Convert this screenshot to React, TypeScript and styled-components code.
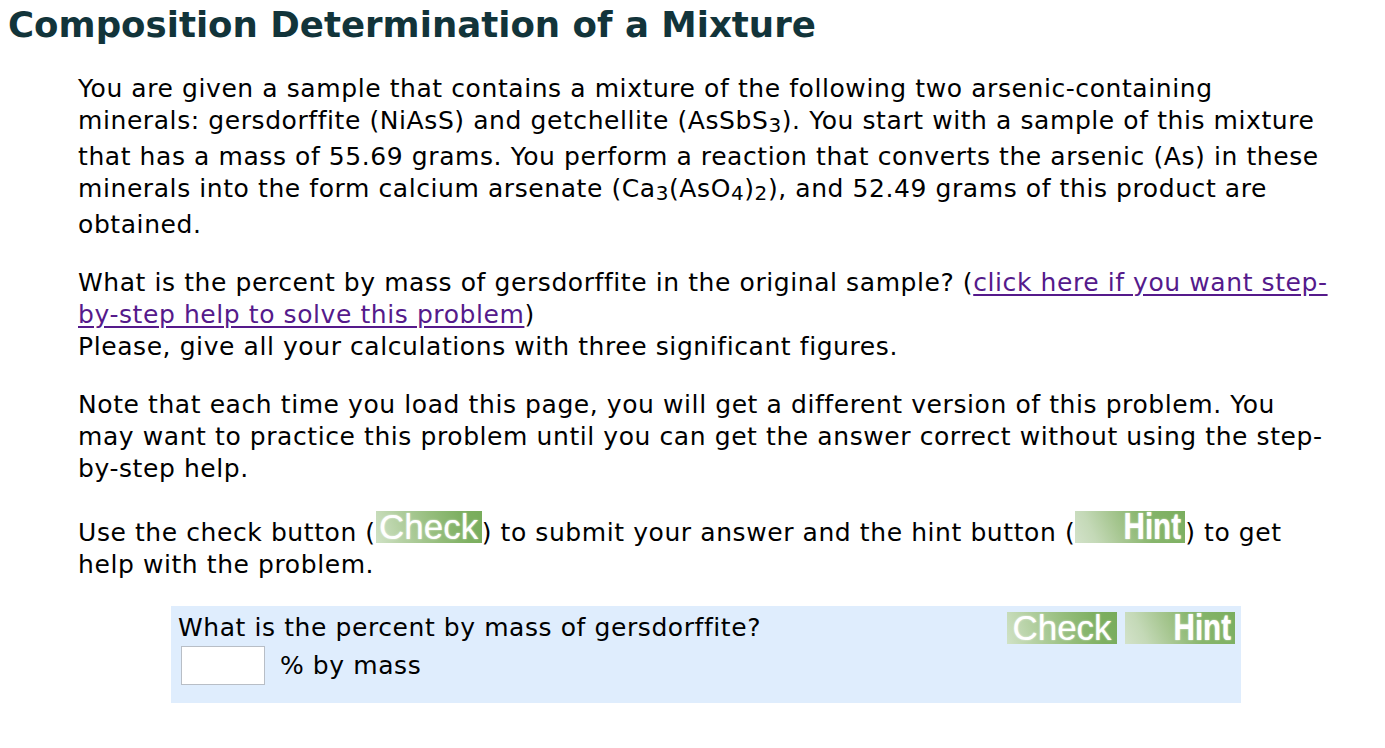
import React from "react";
import styled, { createGlobalStyle } from "styled-components";

const Global = createGlobalStyle`
  html, body { margin: 0; padding: 0; background: #ffffff; }
  body { font-family: "DejaVu Sans", Verdana, sans-serif; color: #000; }
`;

const Page = styled.div`
  padding: 4px 8px 0 8px;
`;

const Title = styled.h1`
  margin: 0;
  font-family: "DejaVu Sans", Verdana, sans-serif;
  font-weight: bold;
  font-size: 35.6px;
  line-height: 42px;
  color: #12343a;
`;

const Content = styled.div`
  margin-left: 70px;
  margin-top: 27px;
  width: 1290px;
  font-size: 25px;
  letter-spacing: 0.58px;
  line-height: 32px;
`;

const Para = styled.p<{ $gap?: number }>`
  margin: 0 0 ${(p) => p.$gap ?? 26}px 0;
`;

const Sub = styled.sub`
  font-size: 0.8em;
  line-height: 32px;
  vertical-align: -3px;
`;

const Link = styled.a`
  color: #551a8b;
  text-decoration: underline;
  text-underline-offset: 3px;
`;

const ImgButton = styled.span<{ $w: number; $kind: "check" | "hint"; $inline?: boolean }>`
  display: inline-flex;
  align-items: center;
  justify-content: ${(p) => (p.$kind === "hint" ? "flex-end" : "center")};
  box-sizing: border-box;
  width: ${(p) => p.$w}px;
  height: 32px;
  padding: ${(p) => (p.$kind === "hint" ? "0 4px 0 0" : "0")};
  vertical-align: ${(p) => (p.$inline ? "2px" : "top")};
  background: ${(p) =>
    p.$kind === "hint"
      ? "linear-gradient(65deg, #d3e2ca 0%, #c4d9b7 18%, #a6c690 40%, #88b66d 62%, #7aae5e 100%)"
      : "linear-gradient(72deg, #d0e2c6 0%, #b4d0a2 25%, #95bd7c 55%, #7eb062 80%, #78ac5b 100%)"};
  color: #ffffff;
  font-family: "Liberation Sans", Arial, sans-serif;
  letter-spacing: 0;
  line-height: 32px;
  text-shadow: 0 0 2px rgba(255, 255, 255, 0.75);
  cursor: pointer;
  user-select: none;
`;

const CheckLabel = styled.span`
  font-size: 35px;
  font-weight: normal;
  line-height: 32px;
`;

const HintLabel = styled.span`
  display: inline-block;
  font-size: 36px;
  font-weight: bold;
  line-height: 32px;
  transform: scaleX(0.82);
  transform-origin: right center;
`;

const QuestionBox = styled.div`
  margin-left: 163px;
  margin-top: 0;
  width: 1070px;
  height: 97px;
  box-sizing: border-box;
  background: #dfedfd;
  display: flex;
  justify-content: space-between;
  padding: 6px 6px 0 7px;
`;

const QuestionLeft = styled.div`
  display: flex;
  flex-direction: column;
`;

const QuestionText = styled.div`
  font-size: 25px;
  letter-spacing: 0.58px;
  line-height: 32px;
`;

const AnswerRow = styled.div`
  display: flex;
  align-items: center;
  gap: 15px;
  margin-top: 2px;
  margin-left: 3px;
  font-size: 25px;
  letter-spacing: 0.58px;
`;

const Input = styled.input`
  box-sizing: border-box;
  width: 84px;
  height: 39px;
  border: 1px solid #b8bec6;
  background: #fff;
  margin: 0;
  padding: 2px;
  font-size: 20px;
  font-family: inherit;
`;

const Buttons = styled.div`
  display: flex;
  gap: 8px;
  align-items: flex-start;
`;

export default function App() {
  return (
    <>
      <Global />
      <Page>
        <Title>Composition Determination of a Mixture</Title>
        <Content>
          <Para>
            You are given a sample that contains a mixture of the following two arsenic-containing
            <br />
            minerals: gersdorffite (NiAsS) and getchellite (AsSbS<Sub>3</Sub>). You start with a sample of this mixture
            <br />
            that has a mass of 55.69 grams. You perform a reaction that converts the arsenic (As) in these
            <br />
            minerals into the form calcium arsenate (Ca<Sub>3</Sub>(AsO<Sub>4</Sub>)<Sub>2</Sub>), and 52.49 grams of this product are
            <br />
            obtained.
          </Para>
          <Para>
            What is the percent by mass of gersdorffite in the original sample? (
            <Link href="#">
              click here if you want step-
              <br />
              by-step help to solve this problem
            </Link>
            )
            <br />
            Please, give all your calculations with three significant figures.
          </Para>
          <Para>
            Note that each time you load this page, you will get a different version of this problem. You
            <br />
            may want to practice this problem until you can get the answer correct without using the step-
            <br />
            by-step help.
          </Para>
          <Para $gap={25}>
            Use the check button (
            <ImgButton $w={106} $kind="check" $inline>
              <CheckLabel>Check</CheckLabel>
            </ImgButton>
            ) to submit your answer and the hint button (
            <ImgButton $w={110} $kind="hint" $inline>
              <HintLabel>Hint</HintLabel>
            </ImgButton>
            ) to get
            <br />
            help with the problem.
          </Para>
        </Content>
        <QuestionBox>
          <QuestionLeft>
            <QuestionText>What is the percent by mass of gersdorffite?</QuestionText>
            <AnswerRow>
              <Input type="text" />
              <span>% by mass</span>
            </AnswerRow>
          </QuestionLeft>
          <Buttons>
            <ImgButton $w={110} $kind="check">
              <CheckLabel>Check</CheckLabel>
            </ImgButton>
            <ImgButton $w={110} $kind="hint">
              <HintLabel>Hint</HintLabel>
            </ImgButton>
          </Buttons>
        </QuestionBox>
      </Page>
    </>
  );
}
